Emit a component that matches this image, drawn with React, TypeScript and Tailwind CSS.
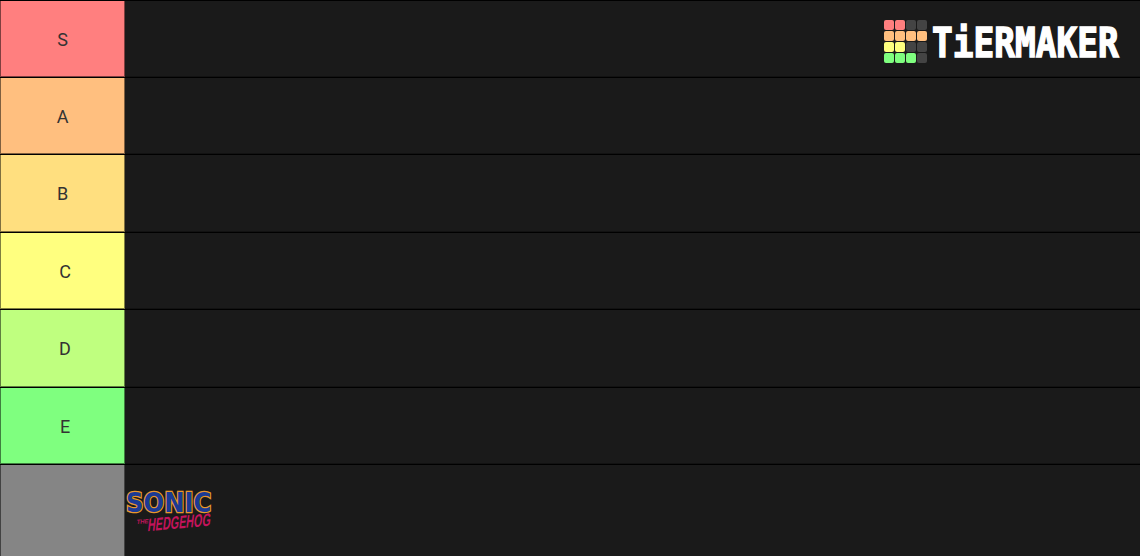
import React from 'react';

const tiers = [
  { label: 'S', color: 'bg-[#ff7f7f]', pad: 'pr-0', height: 'h-[77px]' },
  { label: 'A', color: 'bg-[#ffbf7f]', pad: 'pr-0', height: 'h-[77px]' },
  { label: 'B', color: 'bg-[#ffdf7f]', pad: 'pr-0', height: 'h-[78px]' },
  { label: 'C', color: 'bg-[#ffff7f]', pad: 'pl-[5px]', height: 'h-[77px]' },
  { label: 'D', color: 'bg-[#bfff7f]', pad: 'pl-[5px]', height: 'h-[78px]' },
  { label: 'E', color: 'bg-[#7fff7f]', pad: 'pl-[5px]', height: 'h-[77px]' },
];

const logoCells = [
  'bg-[#ff7f7f]', 'bg-[#ff7f7f]', 'bg-[#444444]', 'bg-[#444444]',
  'bg-[#ffbf7f]', 'bg-[#ffbf7f]', 'bg-[#ffbf7f]', 'bg-[#ffbf7f]',
  'bg-[#ffff7f]', 'bg-[#ffff7f]', 'bg-[#444444]', 'bg-[#444444]',
  'bg-[#7fff7f]', 'bg-[#7fff7f]', 'bg-[#7fff7f]', 'bg-[#444444]',
];

function Logo() {
  return (
    <div className="absolute top-[20px] left-[884px] flex items-start gap-[5px]">
      <div className="grid grid-cols-4 gap-px">
        {logoCells.map((c, i) => (
          <div key={i} className={`w-[10px] h-[10px] rounded-[2px] ${c}`} />
        ))}
      </div>
      <span className="mt-[2px] font-['DejaVu_Sans_Mono'] font-bold text-white text-[41px] leading-[42px] w-[187px] inline-block origin-left scale-x-[0.84] whitespace-nowrap [-webkit-text-stroke:1.5px_#ffffff]">
        TiERMAKER
      </span>
    </div>
  );
}

function Sonic() {
  return (
    <div className="relative w-[88px] h-[44px] mt-[26px] ml-[1px]">
      <div className="font-['DejaVu_Sans'] font-bold text-[27px] leading-[24px] w-[88px] inline-block origin-left scale-x-[0.9] whitespace-nowrap text-[#1b3a94] [-webkit-text-stroke:2.5px_#e8972c] [paint-order:stroke_fill]">
        SONIC
      </div>
      <div className="absolute left-[10px] top-[23px] flex items-end -rotate-[5deg] -skew-x-12 text-[#c4145c] font-['Liberation_Sans'] font-bold">
        <span className="text-[6px] leading-[7px] mb-[9px]">THE</span>
        <span className="text-[18px] leading-[18px] inline-block w-[60px] scale-x-[0.6] origin-left whitespace-nowrap">HEDGEHOG</span>
      </div>
    </div>
  );
}

export default function App() {
  return (
    <div className="relative w-[1140px] h-[556px] overflow-hidden bg-[#1a1a1a] font-['Roboto',sans-serif]">
      {tiers.map((t) => (
        <div key={t.label} className={`flex border-t border-black ${t.height}`}>
          <div className={`w-[125px] shrink-0 flex items-center justify-center border-x border-b border-black/50 pt-px text-[18px] text-[#333333] ${t.color} ${t.pad}`}>
            {t.label}
          </div>
          <div className="flex-1 border-b border-black/30" />
        </div>
      ))}
      {/* Unranked row */}
      <div className="flex h-[92px] border-t border-black">
        <div className="w-[125px] shrink-0 bg-[#858585] border-x border-black/50" />
        <div className="flex-1">
          <Sonic />
        </div>
      </div>
      <Logo />
    </div>
  );
}
